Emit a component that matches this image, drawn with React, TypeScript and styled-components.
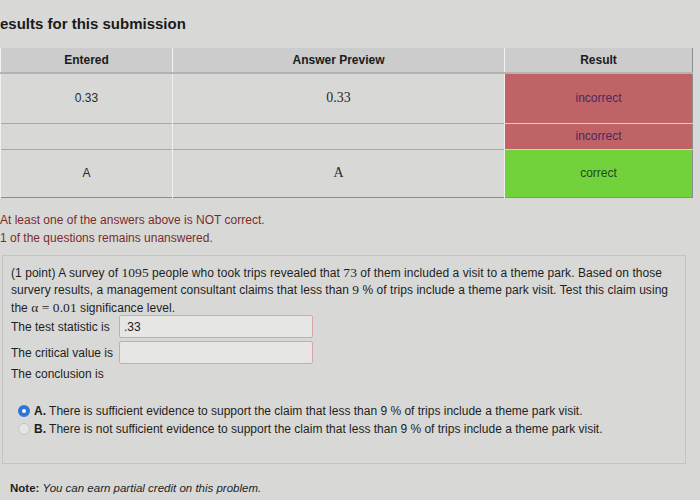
import styled, { createGlobalStyle } from 'styled-components';

const GlobalSt = createGlobalStyle`
  html, body {
    margin: 0;
    padding: 0;
    background: #d8d9d6;
    overflow: hidden;
  }
  body {
    width: 700px;
    height: 500px;
    font-family: "Liberation Sans", Arial, sans-serif;
    color: #1d1d1d;
  }
`;

type ResultKind = 'incorrect' | 'correct';

const rows: { entered: string; preview: string; result: ResultKind; height: number }[] = [
  { entered: '0.33', preview: '0.33', result: 'incorrect', height: 50 },
  { entered: '', preview: '', result: 'incorrect', height: 26 },
  { entered: 'A', preview: 'A', result: 'correct', height: 48 },
];

export default function App() {
  return (
    <PageSt>
      <GlobalSt />
      <TitleSt>esults for this submission</TitleSt>
      <TableSt>
        <colgroup>
          <col style={{ width: 172 }} />
          <col style={{ width: 332 }} />
          <col style={{ width: 188 }} />
        </colgroup>
        <thead>
          <tr>
            <HeadSt>Entered</HeadSt>
            <HeadSt>Answer Preview</HeadSt>
            <HeadSt>Result</HeadSt>
          </tr>
        </thead>
        <tbody>
          {rows.map((row, i) => (
            <tr key={i} style={{ height: row.height }}>
              <CellSt>{row.entered}</CellSt>
              <PreviewSt>{row.preview}</PreviewSt>
              <ResultSt $kind={row.result}>{row.result}</ResultSt>
            </tr>
          ))}
        </tbody>
      </TableSt>

      <MessagesSt>
        <p>At least one of the answers above is NOT correct.</p>
        <p>1 of the questions remains unanswered.</p>
      </MessagesSt>

      <ProblemSt>
        <ParaSt>
          (1 point) A survey of <MathSt>1095</MathSt> people who took trips revealed that{' '}
          <MathSt>73</MathSt> of them included a visit to a theme park. Based on those survery
          results, a management consultant claims that less than <MathSt>9</MathSt> % of trips
          include a theme park visit. Test this claim using the <MathSt>α = 0.01</MathSt>{' '}
          significance level.
        </ParaSt>
        <FieldRowSt>
          <span>The test statistic is</span>
          <InputSt defaultValue=".33" />
        </FieldRowSt>
        <FieldRowSt>
          <span>The critical value is</span>
          <InputSt defaultValue="" />
        </FieldRowSt>
        <ConclusionSt>The conclusion is</ConclusionSt>

        <ChoicesSt>
          <ChoiceSt>
            <RadioSt $checked />
            <span>
              <b>A.</b> There is sufficient evidence to support the claim that less than 9 % of
              trips include a theme park visit.
            </span>
          </ChoiceSt>
          <ChoiceSt>
            <RadioSt />
            <span>
              <b>B.</b> There is not sufficient evidence to support the claim that less than 9 % of
              trips include a theme park visit.
            </span>
          </ChoiceSt>
        </ChoicesSt>
      </ProblemSt>

      <NoteSt>
        <b>Note:</b> <i>You can earn partial credit on this problem.</i>
      </NoteSt>
    </PageSt>
  );
}

const PageSt = styled.div`
  width: 700px;
  height: 500px;
  position: relative;
`;

const TitleSt = styled.h2`
  margin: 0;
  padding-top: 15px;
  font-size: 15px;
  line-height: 18px;
  font-weight: bold;
  color: #1a1a1a;
`;

const TableSt = styled.table`
  margin-top: 15px;
  width: 692px;
  border-collapse: collapse;
  table-layout: fixed;
  font-size: 12px;
  border-right: 1px solid #8c8c8c;
  border-bottom: 1px solid #8c8c8c;
`;

const HeadSt = styled.th`
  height: 24px;
  padding: 0;
  background: #cbcccb;
  font-weight: bold;
  font-size: 12px;
  color: #1b1b1b;
  border-bottom: 2px solid #b3b3b3;
  border-left: 1px solid #f2f2f2;
  text-align: center;
`;

const CellSt = styled.td`
  padding: 0;
  text-align: center;
  vertical-align: middle;
  border-top: 1px solid #a8a8a8;
  border-left: 1px solid #f0f0f0;
  color: #2a2a2a;
`;

const PreviewSt = styled(CellSt)`
  font-family: "Liberation Serif", "Times New Roman", serif;
  font-size: 14px;
`;

const ResultSt = styled(CellSt)<{ $kind: ResultKind }>`
  background: ${(p) => (p.$kind === 'correct' ? '#71d23c' : '#bf6367')};
  color: ${(p) => (p.$kind === 'correct' ? '#1f4a1a' : '#4a2a5c')};
  border-top: 1px solid #e6c8c8;
`;

const MessagesSt = styled.div`
  margin-top: 13px;
  font-size: 12px;
  line-height: 18px;
  color: #7c2b2d;

  p {
    margin: 0;
  }
`;

const ProblemSt = styled.div`
  margin: 8px 0 0 2px;
  width: 684px;
  height: 209px;
  box-sizing: border-box;
  padding: 9px 8px 0 8px;
  border: 1px solid #c4c4c2;
  font-size: 12px;
  color: #1e1e1e;
`;

const ParaSt = styled.p`
  margin: 0;
  line-height: 17.5px;
  letter-spacing: 0.05px;
`;

const MathSt = styled.span`
  font-family: "Liberation Serif", "Times New Roman", serif;
  font-size: 13.5px;
  line-height: 1;
`;

const FieldRowSt = styled.div`
  display: flex;
  align-items: center;
  gap: 5px;
  height: 25px;
  margin-top: -3px;

  & + & {
    margin-top: 1px;
  }

  span {
    width: 103px;
  }
`;

const InputSt = styled.input`
  width: 194px;
  height: 23px;
  box-sizing: border-box;
  border: 1px solid #d7a6a6;
  border-radius: 2px;
  background: #e6e6e4;
  font-family: "Liberation Sans", Arial, sans-serif;
  font-size: 12px;
  padding: 0 4px;
  color: #1e1e1e;
  outline: none;
`;

const ConclusionSt = styled.div`
  line-height: 18px;
  margin-top: 0;
`;

const ChoicesSt = styled.div`
  margin-top: 19px;
  display: flex;
  flex-direction: column;
`;

const ChoiceSt = styled.label`
  display: flex;
  align-items: center;
  gap: 4px;
  line-height: 18px;
  padding-left: 7px;
`;

const RadioSt = styled.span<{ $checked?: boolean }>`
  width: 12px;
  height: 12px;
  border-radius: 50%;
  box-sizing: border-box;
  flex-shrink: 0;
  background: ${(p) => (p.$checked ? '#ffffff' : '#e4e4e2')};
  border: ${(p) => (p.$checked ? '4px solid #2f74d8' : '1px solid #c4c4c4')};
`;

const NoteSt = styled.div`
  margin: 18px 0 0 10px;
  font-size: 11.5px;
  color: #1e1e1e;
`;
